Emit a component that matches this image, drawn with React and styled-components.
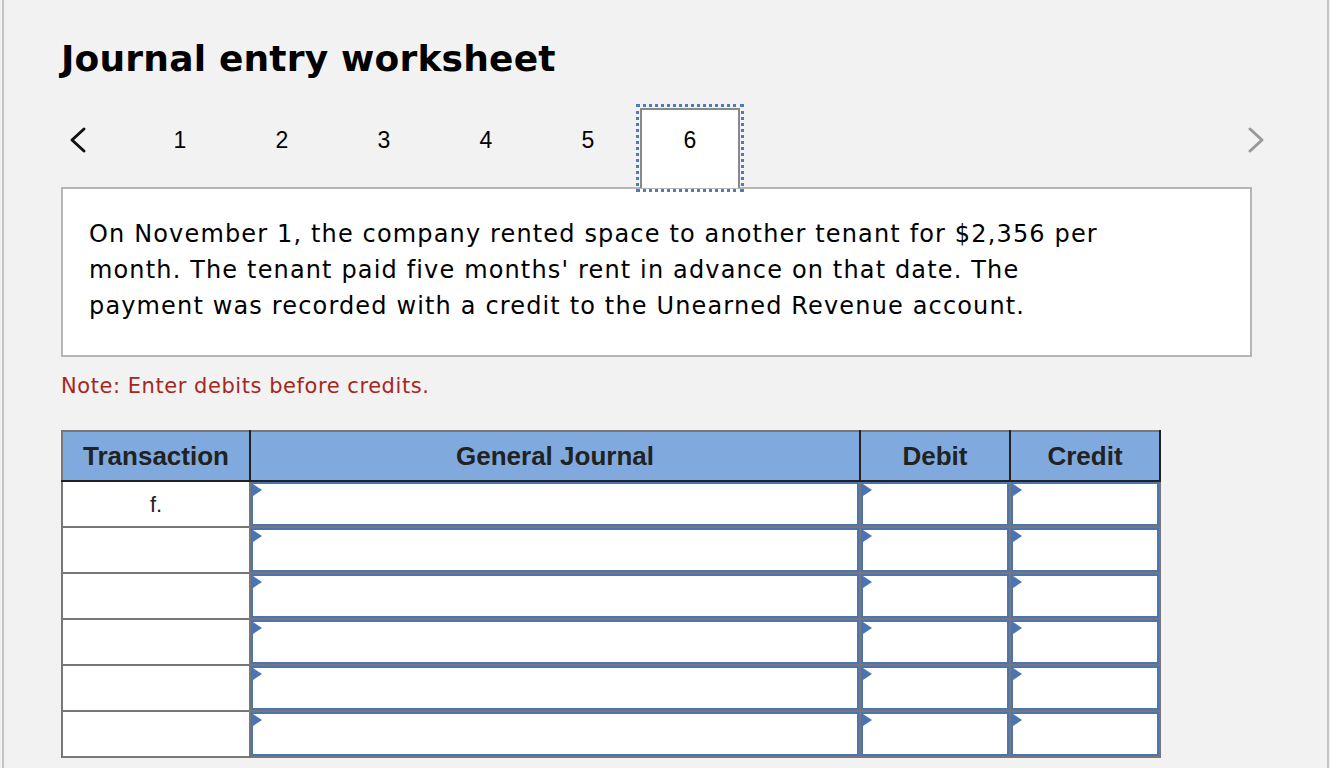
import styled, { createGlobalStyle } from 'styled-components'

const GlobalStyle = createGlobalStyle`
  html, body {
    margin: 0;
    padding: 0;
    background: #f2f2f2;
  }
`

const Page = styled.div`
  box-sizing: border-box;
  width: 1327px;
  min-height: 768px;
  margin-left: 2px;
  padding: 38px 0 0 57px;
  background: #f2f2f2;
  border-left: 2px solid #c4c4c4;
  border-right: 2px solid #c4c4c4;
  font-family: 'DejaVu Sans', Verdana, sans-serif;
`

const Title = styled.h1`
  margin: 0;
  font-family: 'DejaVu Sans', Verdana, sans-serif;
  font-size: 36px;
  font-weight: bold;
  line-height: normal;
  letter-spacing: 0.2px;
  color: #000;
`

const Nav = styled.div`
  display: flex;
  align-items: flex-start;
  width: 1207px;
  height: 80px;
  margin-top: 29px;
`

const Arrow = styled.button`
  display: flex;
  align-items: flex-start;
  height: 80px;
  padding: 17px 0 0 ${({ $left }) => $left}px;
  width: ${({ $width }) => $width}px;
  margin-left: ${({ $push }) => ($push ? 'auto' : '0')};
  border: none;
  background: none;
  cursor: pointer;
`

const Tab = styled.div`
  box-sizing: border-box;
  width: 100px;
  height: 80px;
  margin-right: 2px;
  padding-top: 19px;
  text-align: center;
  font-family: 'Liberation Sans', Arial, sans-serif;
  font-size: 23px;
  line-height: 1;
  color: #000;
  position: relative;
  z-index: 1;
  background: ${({ $active }) => ($active ? '#fff' : 'transparent')};
  border: 2px solid ${({ $active }) => ($active ? '#888' : 'transparent')};
  border-bottom: none;
  outline: ${({ $active }) => ($active ? '3px dotted #4a7cc4' : 'none')};
  outline-offset: 1px;
`

const Scenario = styled.div`
  box-sizing: border-box;
  width: 1191px;
  margin-top: -1px;
  padding: 27px 26px 31px 26px;
  background: #fff;
  border: 2px solid #b5b5b5;
`

const ScenarioText = styled.p`
  margin: 0;
  max-width: 1020px;
  font-size: 24px;
  letter-spacing: 1.15px;
  line-height: 36px;
  color: #000;
`

const Note = styled.p`
  margin: 17px 0 0;
  font-size: 21px;
  letter-spacing: 0.55px;
  line-height: 24px;
  color: #a6261e;
`

const Table = styled.table`
  margin-top: 32px;
  border-collapse: collapse;
  border: 2px solid #777;
  table-layout: fixed;
  width: 1098px;
`

const Head = styled.th`
  height: 48px;
  padding: 0;
  background: #80aade;
  color: #222;
  font-family: 'Liberation Sans', Arial, sans-serif;
  font-size: 26px;
  font-weight: bold;
  text-align: center;
  border-top: 2px solid #777;
  border-left: 2px solid #222;
  border-right: 2px solid #222;
  border-bottom: 2px solid #222;
  &:first-child {
    border-left-color: #777;
  }
`

const Cell = styled.td`
  height: 44px;
  padding: 0;
  background: #fff;
  border: 2px solid #777;
  text-align: center;
  vertical-align: top;
  font-family: 'Liberation Sans', Arial, sans-serif;
  font-size: 22px;
  color: #222;
`

const Label = styled.div`
  padding-top: 10px;
`

const Input = styled.div`
  box-sizing: border-box;
  position: relative;
  height: 44px;
  background: #fff;
  border: 2px solid #4a74b4;
  &::before {
    content: '';
    position: absolute;
    left: 0;
    top: 0;
    border-top: 6px solid transparent;
    border-bottom: 6px solid transparent;
    border-left: 9px solid #4a74b4;
  }
`

function Chevron({ color, flip }) {
  return (
    <svg width="20" height="30" viewBox="0 0 20 30">
      <path
        d={flip ? 'M4 4 L16 15 L4 26' : 'M16 4 L4 15 L16 26'}
        fill="none"
        stroke={color}
        strokeWidth="3"
        strokeLinecap="round"
        strokeLinejoin="round"
      />
    </svg>
  )
}

const rows = ['f.', '', '', '', '', '']

export default function App() {
  return (
    <>
      <GlobalStyle />
      <Page>
        <Title>Journal entry worksheet</Title>
        <Nav>
          <Arrow $left={7} $width={69} aria-label="previous">
            <Chevron color="#111" />
          </Arrow>
          {[1, 2, 3, 4, 5, 6].map((n) => (
            <Tab key={n} $active={n === 6}>
              {n}
            </Tab>
          ))}
          <Arrow $left={0} $width={22} $push aria-label="next">
            <Chevron color="#999" flip />
          </Arrow>
        </Nav>
        <Scenario>
          <ScenarioText>
            On November 1, the company rented space to another tenant for
            $2,356 per month. The tenant paid five months' rent in advance on
            that date. The payment was recorded with a credit to the Unearned
            Revenue account.
          </ScenarioText>
        </Scenario>
        <Note>Note: Enter debits before credits.</Note>
        <Table>
          <colgroup>
            <col style={{ width: 188 }} />
            <col style={{ width: 610 }} />
            <col style={{ width: 150 }} />
            <col style={{ width: 150 }} />
          </colgroup>
          <thead>
            <tr>
              <Head>Transaction</Head>
              <Head>General Journal</Head>
              <Head>Debit</Head>
              <Head>Credit</Head>
            </tr>
          </thead>
          <tbody>
            {rows.map((label, i) => (
              <tr key={i}>
                <Cell>
                  <Label>{label}</Label>
                </Cell>
                <Cell>
                  <Input />
                </Cell>
                <Cell>
                  <Input />
                </Cell>
                <Cell>
                  <Input />
                </Cell>
              </tr>
            ))}
          </tbody>
        </Table>
      </Page>
    </>
  )
}
